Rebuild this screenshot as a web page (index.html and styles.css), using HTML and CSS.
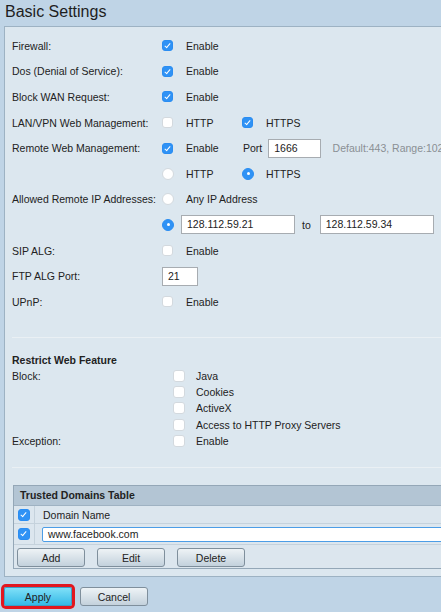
FILE: index.html
```html
<html lang="en">
  <head>
    <meta charset="UTF-8" />
    <meta name="viewport" content="width=device-width, initial-scale=1.0" />
    <title>Basic Settings</title>
    <link rel="stylesheet" href="styles.css">
  </head>
  <body>
    <h1 class="title">Basic Settings</h1>
    <div class="panel">
      <div class="row">
        <span class="label">Firewall:</span>
        <span class="opt"><span class="cb on"></span>Enable</span>
      </div>
      <div class="row">
        <span class="label">Dos (Denial of Service):</span>
        <span class="opt"><span class="cb on"></span>Enable</span>
      </div>
      <div class="row">
        <span class="label">Block WAN Request:</span>
        <span class="opt"><span class="cb on"></span>Enable</span>
      </div>
      <div class="row">
        <span class="label">LAN/VPN Web Management:</span>
        <span class="opt"><span class="cb"></span>HTTP</span>
        <span class="opt"><span class="cb on"></span>HTTPS</span>
      </div>
      <div class="row">
        <span class="label">Remote Web Management:</span>
        <span class="opt"><span class="cb on"></span>Enable</span>
        <span class="port">Port</span>
        <span class="field port-field">1666</span>
        <span class="hint">Default:443, Range:1025-65535</span>
      </div>
      <div class="row">
        <span class="label"></span>
        <span class="opt"><span class="rd"></span>HTTP</span>
        <span class="opt"><span class="rd on"></span>HTTPS</span>
      </div>
      <div class="row">
        <span class="label">Allowed Remote IP Addresses:</span>
        <span class="opt wide"><span class="rd"></span>Any IP Address</span>
      </div>
      <div class="row">
        <span class="label"></span>
        <span class="rd on ip-radio"></span>
        <span class="field ip-field">128.112.59.21</span>
        <span class="to">to</span>
        <span class="field ip-field">128.112.59.34</span>
      </div>
      <div class="row">
        <span class="label">SIP ALG:</span>
        <span class="opt"><span class="cb"></span>Enable</span>
      </div>
      <div class="row">
        <span class="label">FTP ALG Port:</span>
        <span class="field ftp-field">21</span>
      </div>
      <div class="row">
        <span class="label">UPnP:</span>
        <span class="opt"><span class="cb"></span>Enable</span>
      </div>

      <hr class="sep first" />

      <div class="restrict">
        <div class="heading">Restrict Web Feature</div>
        <div class="small-row">
          <span class="label2">Block:</span>
          <span class="opt wide"><span class="cb"></span>Java</span>
        </div>
        <div class="small-row">
          <span class="label2"></span>
          <span class="opt wide"><span class="cb"></span>Cookies</span>
        </div>
        <div class="small-row">
          <span class="label2"></span>
          <span class="opt wide"><span class="cb"></span>ActiveX</span>
        </div>
        <div class="small-row">
          <span class="label2"></span>
          <span class="opt wide"><span class="cb"></span>Access to HTTP Proxy Servers</span>
        </div>
        <div class="small-row">
          <span class="label2">Exception:</span>
          <span class="opt wide"><span class="cb"></span>Enable</span>
        </div>
      </div>

      <hr class="sep" />

      <div class="table">
        <div class="table-head">Trusted Domains Table</div>
        <div class="table-row">
          <span class="cell-check"><span class="cb on"></span></span>
          <span class="cell-text">Domain Name</span>
        </div>
        <div class="table-row">
          <span class="cell-check"><span class="cb on"></span></span>
          <span class="cell-input"><span class="domain-field">www.facebook.com</span></span>
        </div>
        <div class="table-buttons">
          <button class="btn">Add</button>
          <button class="btn">Edit</button>
          <button class="btn">Delete</button>
        </div>
      </div>
    </div>
    <div class="actions">
      <button class="btn apply">Apply</button>
      <button class="btn">Cancel</button>
    </div>
  </body>
</html>
```
FILE: styles.css
```css
body {
  margin: 0;
  padding: 0;
  width: 441px;
  height: 612px;
  overflow: hidden;
  background-color: #bfd4e6;
  font-family: "Liberation Sans", Arial, sans-serif;
  font-size: 10.5px;
  color: #222;
}

.title {
  margin: 0;
  padding: 3px 0 0 5px;
  height: 23px;
  line-height: 18px;
  font-size: 16px;
  font-weight: normal;
  color: #1e1e1e;
}

.panel {
  margin-left: 4px;
  width: 470px;
  padding: 6px 0 7px 7px;
  background-color: #dce7ef;
  border: 1px solid #9db2c3;
}

.row {
  display: flex;
  align-items: center;
  height: 25.6px;
  white-space: nowrap;
}

.label {
  width: 150px;
  flex-shrink: 0;
}

.opt {
  display: flex;
  align-items: center;
  width: 80px;
  flex-shrink: 0;
}

.opt.wide {
  width: auto;
}

.cb {
  display: inline-block;
  box-sizing: border-box;
  width: 11px;
  height: 11px;
  margin-right: 13px;
  border: 1px solid #d3d9de;
  border-radius: 3px;
  background-color: #fff;
  position: relative;
  flex-shrink: 0;
}

.cb.on {
  border-color: #2a8df2;
  background-color: #2f92f5;
}

.cb.on::after {
  content: "";
  position: absolute;
  left: 3px;
  top: 1px;
  width: 2px;
  height: 5px;
  border: solid #fff;
  border-width: 0 1.5px 1.5px 0;
  transform: rotate(40deg);
}

.rd {
  display: inline-block;
  box-sizing: border-box;
  width: 12px;
  height: 12px;
  margin-right: 12px;
  border: 1px solid #d3d9de;
  border-radius: 50%;
  background-color: #fff;
  position: relative;
  flex-shrink: 0;
}

.rd.on {
  border-color: #2a8df2;
  background-color: #2f92f5;
}

.rd.on::after {
  content: "";
  position: absolute;
  left: 3.5px;
  top: 3.5px;
  width: 3px;
  height: 3px;
  border-radius: 50%;
  background-color: #fff;
}

.field {
  display: inline-block;
  box-sizing: border-box;
  height: 19px;
  line-height: 17px;
  padding-left: 5px;
  background-color: #fff;
  border: 1px solid #a7acb1;
  color: #222;
}

.port {
  margin-left: 1px;
  margin-right: 6px;
}

.port-field {
  width: 57px;
}

.hint {
  margin-left: 12px;
  color: #8a8f94;
}

.ip-radio {
  margin-right: 7px;
}

.ip-field {
  width: 114px;
}

.to {
  margin: 0 9px 0 7px;
}

.ftp-field {
  width: 36px;
}

.sep {
  margin: 18px 0 0 0;
  border: none;
  border-top: 1px solid #eaf0f4;
}

.sep.first {
  margin-top: 22px;
}

.restrict {
  padding-top: 14px;
}

.heading {
  font-weight: bold;
  height: 16px;
  line-height: 16px;
}

.small-row {
  display: flex;
  align-items: center;
  height: 16.3px;
  white-space: nowrap;
}

.label2 {
  width: 161px;
  flex-shrink: 0;
}

.restrict .cb {
  width: 12px;
  height: 12px;
  margin-right: 11px;
}

.table {
  margin: 17px 0 0 1px;
  border: 1px solid #94a7b7;
  background-color: #dce6ee;
}

.table-head {
  height: 19px;
  line-height: 19px;
  padding-left: 6px;
  background-color: #b3c5d4;
  font-weight: bold;
  border-bottom: 1px solid #9fb2c2;
}

.table-row {
  display: flex;
  align-items: center;
  height: 17px;
  border-bottom: 1px solid #c5d2dc;
}

.cell-check {
  display: flex;
  align-items: center;
  justify-content: center;
  width: 20px;
  height: 100%;
  border-right: 1px solid #c5d2dc;
}

.cell-check .cb {
  margin: 0;
  width: 12px;
  height: 12px;
}

.cell-text {
  padding-left: 8px;
}

.cell-input {
  flex: 1;
  padding-left: 7px;
}

.domain-field {
  display: block;
  box-sizing: border-box;
  height: 15px;
  line-height: 12px;
  padding-left: 5px;
  background-color: #fff;
  border: 1.5px solid #4c9de6;
  border-radius: 2px;
}

.table-row:nth-child(3) {
  height: 20px;
}

.table-buttons {
  display: flex;
  gap: 12px;
  padding: 3px 3px 1px 3px;
}

.btn {
  box-sizing: border-box;
  width: 68px;
  height: 19px;
  padding: 0;
  border: 1px solid #7f8f9c;
  border-radius: 3px;
  background: linear-gradient(#eef3f6, #c3d1dc);
  font-family: "Liberation Sans", Arial, sans-serif;
  font-size: 10.5px;
  color: #222;
}

.actions {
  display: flex;
  gap: 8px;
  padding: 10px 0 0 4px;
}

.apply {
  border-color: #3f9cc4;
  background: linear-gradient(#7fe0f8, #35b9e6);
  box-shadow: 0 0 0 3px #e2161e;
  border-radius: 2px;
}
```
